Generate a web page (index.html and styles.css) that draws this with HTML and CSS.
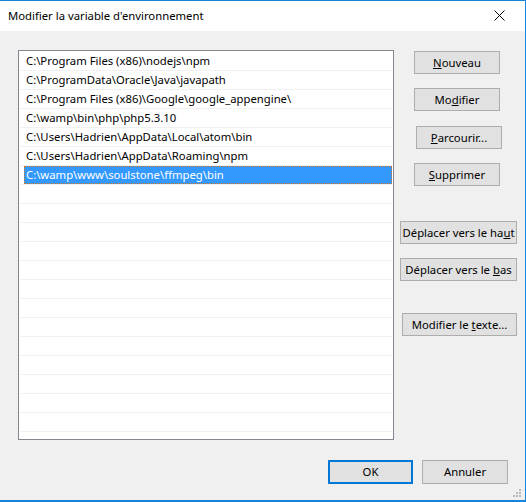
FILE: index.html
```html
<!DOCTYPE html>
<html lang="fr">
<head>
  <meta charset="UTF-8">
  <meta name="viewport" content="width=device-width, initial-scale=1.0">
  <title>Modifier la variable d'environnement</title>
  <link rel="stylesheet" href="styles.css">
</head>
<body>
  <div class="window">
    <header class="titlebar">
      <span class="title">Modifier la variable d'environnement</span>
      <span class="close">
        <svg width="11" height="11" viewBox="0 0 11 11">
          <path d="M0.5 0.5 L10.5 10.5 M10.5 0.5 L0.5 10.5" stroke="#000" stroke-width="1" fill="none"/>
        </svg>
      </span>
    </header>

    <main class="content">
      <div class="top">
        <ul class="list">
          <li><span class="label">C:\Program Files (x86)\nodejs\npm</span></li>
          <li><span class="label">C:\ProgramData\Oracle\Java\javapath</span></li>
          <li><span class="label">C:\Program Files (x86)\Google\google_appengine\</span></li>
          <li><span class="label">C:\wamp\bin\php\php5.3.10</span></li>
          <li><span class="label">C:\Users\Hadrien\AppData\Local\atom\bin</span></li>
          <li><span class="label">C:\Users\Hadrien\AppData\Roaming\npm</span></li>
          <li class="selected"><span class="label">C:\wamp\www\soulstone\ffmpeg\bin</span></li>
          <li></li><li></li><li></li><li></li><li></li><li></li><li></li>
          <li></li><li></li><li></li><li></li><li></li><li></li><li></li>
        </ul>

        <div class="actions">
          <button class="btn btn-nouveau"><u>N</u>ouveau</button>
          <button class="btn btn-modifier">Mo<u>d</u>ifier</button>
          <button class="btn btn-parcourir"><u>P</u>arcourir...</button>
          <button class="btn btn-supprimer"><u>S</u>upprimer</button>
          <button class="btn btn-wide btn-haut">Déplacer vers le ha<u>u</u>t</button>
          <button class="btn btn-wide btn-bas">Déplacer vers le <u>b</u>as</button>
          <button class="btn btn-wide btn-texte">Modifier le <u>t</u>exte...</button>
        </div>
      </div>

      <footer class="footer">
        <button class="btn btn-ok">OK</button>
        <button class="btn btn-cancel">Annuler</button>
      </footer>
    </main>

    <svg class="grip" width="9" height="9" viewBox="0 0 9 9">
      <rect x="6" y="0" width="2" height="2" fill="#b8b8b8"/>
      <rect x="3" y="3" width="2" height="2" fill="#b8b8b8"/>
      <rect x="6" y="3" width="2" height="2" fill="#b8b8b8"/>
      <rect x="0" y="6" width="2" height="2" fill="#b8b8b8"/>
      <rect x="3" y="6" width="2" height="2" fill="#b8b8b8"/>
      <rect x="6" y="6" width="2" height="2" fill="#b8b8b8"/>
    </svg>
  </div>
</body>
</html>
```

FILE: styles.css
```css
* {
  box-sizing: border-box;
}

html, body {
  margin: 0;
  padding: 0;
}

body {
  font-family: "Noto Sans", "Open Sans", sans-serif;
  font-size: 11.3px;
  color: #000;
}

.window {
  position: relative;
  width: 526px;
  height: 502px;
  background: #f0f0f0;
  border-top: 1px solid #1883d7;
  border-right: 1px solid #1883d7;
  border-bottom: 1px solid #1883d7;
  box-shadow: inset 0 -1px 0 #1883d7;
  display: flex;
  flex-direction: column;
}

.titlebar {
  height: 30px;
  background: #fff;
  display: flex;
  align-items: center;
  justify-content: space-between;
  padding-left: 8px;
}

.title {
  line-height: 30px;
}

.close {
  width: 46px;
  height: 30px;
  display: flex;
  align-items: center;
  justify-content: center;
  padding-right: 6px;
  padding-bottom: 1px;
}

.content {
  flex: 1;
  padding: 19px 8px 0 18px;
}

.top {
  display: flex;
}

.list {
  flex-shrink: 0;
  list-style: none;
  margin: 0;
  padding: 1px 1px 0 1px;
  width: 376px;
  height: 390px;
  overflow: hidden;
  background: #fff;
  border: 1px solid #828790;
}

.list li {
  height: 19px;
  border-bottom: 1px solid #f0f0f0;
  line-height: 18px;
  white-space: nowrap;
}

.label {
  display: block;
  height: 18px;
  margin-left: 4px;
  padding-left: 2px;
}

.selected .label {
  background: #3399ff;
  color: #fff;
  outline: 1px dotted #cc7a30;
  outline-offset: -1px;
}

.actions {
  flex-shrink: 0;
  width: 117px;
  margin-left: 6px;
  display: flex;
  flex-direction: column;
  align-items: flex-start;
}

.btn {
  font-family: inherit;
  font-size: 11.3px;
  color: #000;
  background: #e1e1e1;
  border: 1px solid #adadad;
  border-radius: 0;
  height: 23px;
  width: 86px;
  padding: 0;
  line-height: 20px;
  text-align: center;
  white-space: nowrap;
}

.btn u {
  text-underline-offset: 1px;
}

.btn-wide {
  width: 117px;
}

.btn-nouveau {
  margin: 1px 0 0 14px;
}

.btn-modifier {
  margin: 14px 0 0 14px;
}

.btn-parcourir {
  margin: 15px 0 0 16px;
}

.btn-supprimer {
  margin: 14px 0 0 14px;
}

.btn-haut {
  margin-top: 35px;
}

.btn-bas {
  margin-top: 14px;
}

.btn-texte {
  margin: 32px 0 0 2px;
  width: 115px;
}

.footer {
  display: flex;
  justify-content: flex-end;
  gap: 9px;
  margin-top: 20px;
  padding-right: 9px;
}

.footer .btn {
  height: 24px;
}

.btn-ok {
  width: 85px;
  border: 2px solid #0078d7;
}

.btn-cancel {
  width: 86px;
}

.grip {
  position: absolute;
  right: 3px;
  bottom: 3px;
}
```
